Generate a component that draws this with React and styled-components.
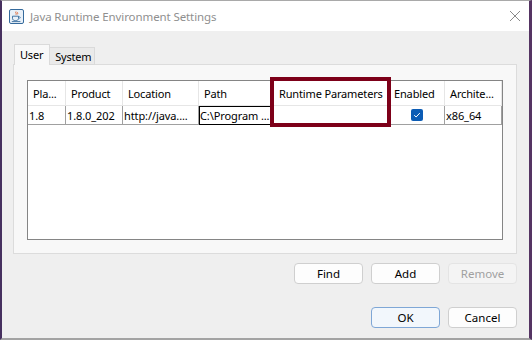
import React from 'react'
import styled, { createGlobalStyle } from 'styled-components'

const Global = createGlobalStyle`
  html, body { margin: 0; padding: 0; background: #4a2f66; }
  body { font-family: "Noto Sans", "Open Sans", sans-serif; }
`

const Window = styled.div`
  box-sizing: border-box;
  width: 532px;
  height: 340px;
  display: flex;
  flex-direction: column;
  border-top: 1px solid #a9a9a9;
  border-left: 2px solid #46305f;
  border-right: 3px solid #553463;
  border-bottom: 2px solid #a3a3a3;
  background: #efefef;
`

const TitleBar = styled.div`
  height: 30px;
  background: #ffffff;
  display: flex;
  align-items: center;
  padding: 0 8px 0 7px;
`

const Title = styled.span`
  margin-left: 6px;
  font-size: 11.5px;
  letter-spacing: -0.1px;
  color: #8f8f8f;
  flex: 1;
`

const Body = styled.div`
  flex: 1;
  padding: 13px 12px 0 11px;
  display: flex;
  flex-direction: column;
`

const TabStrip = styled.div`
  display: flex;
  align-items: flex-end;
  height: 21px;
  margin-bottom: -1px;
  padding-left: 1px;
  position: relative;
  z-index: 1;
`

const Tab = styled.div`
  box-sizing: border-box;
  height: ${p => (p.$active ? '21px' : '18px')};
  padding: ${p => (p.$active ? '2px 6px 0 5px' : '1px 3px 0 5px')};
  font-size: 11px;
  letter-spacing: -0.2px;
  color: #000;
  background: ${p => (p.$active ? '#f8f8f8' : '#eaeaea')};
  border: 1px solid #dadada;
  border-bottom: ${p => (p.$active ? 'none' : '1px solid #dadada')};
  border-left: ${p => (p.$last ? 'none' : '1px solid #dadada')};
`

const Panel = styled.div`
  background: #f8f8f8;
  border: 1px solid #dcdcdc;
  padding: 15px 13px 13px 13px;
`

const TableWrap = styled.div`
  position: relative;
  box-sizing: border-box;
  height: 160px;
  border: 1px solid #858585;
  background: #ffffff;
`

const Row = styled.div`
  display: grid;
  grid-template-columns: 38px 57px 76px 72px 118px 56px 57px;
  height: ${p => (p.$head ? '25px' : '19px')};
  border-bottom: 1px solid ${p => (p.$head ? '#e6e6e6' : '#a0a0a0')};
  box-sizing: border-box;
`

const HeadCell = styled.div`
  display: flex;
  align-items: center;
  padding-left: ${p => p.$indent || 5}px;
  font-size: 11px;
  letter-spacing: -0.15px;
  color: #000;
  border-right: 1px solid #e6e6e6;
  white-space: nowrap;
  overflow: hidden;
`

const Cell = styled.div`
  box-sizing: border-box;
  display: flex;
  align-items: center;
  justify-content: ${p => (p.$center ? 'center' : 'flex-start')};
  padding-left: ${p => (p.$center ? '0' : '1px')};
  font-size: 11px;
  letter-spacing: -0.1px;
  color: #000;
  border-right: 1px solid #a0a0a0;
  white-space: nowrap;
  overflow: hidden;
  ${p => p.$focus && 'outline: 1px solid #000; outline-offset: -1px; margin-bottom: -1px;'}
`

const Check = styled.div`
  width: 12px;
  height: 12px;
  border-radius: 2px;
  background: #0b5cb5;
  display: flex;
  align-items: center;
  justify-content: center;
`

const Highlight = styled.div`
  position: absolute;
  left: 242px;
  top: -4px;
  width: 121px;
  height: 50px;
  box-sizing: border-box;
  border: 4px solid #7d0019;
`

const ButtonRow = styled.div`
  display: flex;
  justify-content: flex-end;
  gap: 8px;
  margin-top: ${p => p.$top}px;
`

const Button = styled.div`
  box-sizing: border-box;
  width: 69px;
  height: 21px;
  border-radius: 4px;
  display: flex;
  align-items: center;
  justify-content: center;
  font-size: 11.5px;
  color: ${p => (p.$disabled ? '#a0a0a0' : '#000')};
  background: ${p => (p.$default ? '#f2f7fc' : p.$disabled ? '#f4f4f4' : '#fdfdfd')};
  border: 1px solid ${p => (p.$default ? '#7fa7d6' : p.$disabled ? '#e4e4e4' : '#cfcfcf')};
`

const JavaIcon = () => (
  <svg width="15" height="15" viewBox="0 0 15 15">
    <rect x="0.5" y="0.5" width="14" height="14" rx="1.5" fill="#e8f0f8" stroke="#356a9c" />
    <path d="M7 2.5c-1.2 1.2 1 1.8 0 3.3M8.6 3c-.8.9.6 1.3 0 2.3" stroke="#e0602a" strokeWidth="0.9" fill="none" />
    <path d="M3.5 7.2h6v2.2c0 1.4-1.2 2.2-3 2.2s-3-.8-3-2.2z" fill="none" stroke="#356a9c" strokeWidth="0.9" />
    <path d="M9.5 7.8h1.1c.9 0 .9 1.6-.2 1.6" fill="none" stroke="#356a9c" strokeWidth="0.8" />
    <path d="M2.8 12.6h8.6" stroke="#356a9c" strokeWidth="0.9" />
  </svg>
)

const CloseIcon = () => (
  <svg width="12" height="12" viewBox="0 0 12 12">
    <path d="M1 1L11 11M11 1L1 11" stroke="#8a8a8a" strokeWidth="1" />
  </svg>
)

const columns = [
  { label: 'Pla...' },
  { label: 'Product' },
  { label: 'Location' },
  { label: 'Path' },
  { label: 'Runtime Parameters', indent: 8 },
  { label: 'Enabled' },
  { label: 'Archite...' },
]

export default function App() {
  return (
    <>
      <Global />
      <Window>
        <TitleBar>
          <JavaIcon />
          <Title>Java Runtime Environment Settings</Title>
          <CloseIcon />
        </TitleBar>
        <Body>
          <TabStrip>
            <Tab $active>User</Tab>
            <Tab $last>System</Tab>
          </TabStrip>
          <Panel>
            <TableWrap>
              <Row $head>
                {columns.map(c => (
                  <HeadCell key={c.label} $indent={c.indent}>{c.label}</HeadCell>
                ))}
              </Row>
              <Row>
                <Cell>1.8</Cell>
                <Cell>1.8.0_202</Cell>
                <Cell>http://java....</Cell>
                <Cell $focus>C:\Program ...</Cell>
                <Cell />
                <Cell $center>
                  <Check>
                    <svg width="8" height="8" viewBox="0 0 8 8">
                      <path d="M1.2 4.2l1.9 1.8 3.7-3.9" stroke="#fff" strokeWidth="1" fill="none" />
                    </svg>
                  </Check>
                </Cell>
                <Cell>x86_64</Cell>
              </Row>
              <Highlight />
            </TableWrap>
          </Panel>
          <ButtonRow $top={9}>
            <Button>Find</Button>
            <Button>Add</Button>
            <Button $disabled>Remove</Button>
          </ButtonRow>
          <ButtonRow $top={23}>
            <Button $default>OK</Button>
            <Button>Cancel</Button>
          </ButtonRow>
        </Body>
      </Window>
    </>
  )
}
